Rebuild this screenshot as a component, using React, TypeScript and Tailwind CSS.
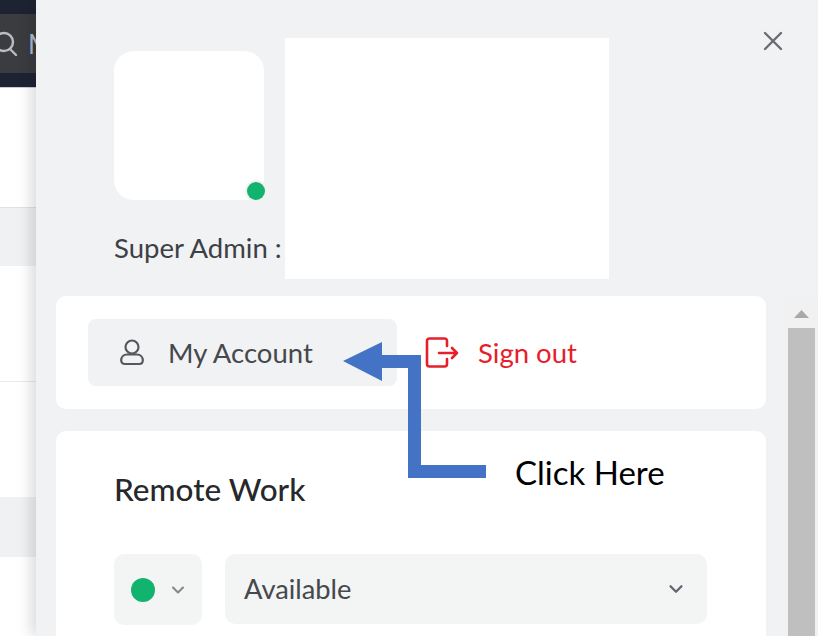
import { ChevronDown, X } from 'lucide-react';

function UserIcon() {
  return (
    <svg width="26" height="28" viewBox="0 0 26 28" fill="none" stroke="#55585c" strokeWidth={2.2}>
      <circle cx="13" cy="8" r="6.500" />
      <path d="M8 15.500h10c3.400 0 5.800 2.600 5.800 5.700 0 2.400-1.400 3.800-3.600 3.800H5.800c-2.200 0-3.600-1.400-3.600-3.800 0-3.100 2.400-5.700 5.800-5.700z" />
    </svg>
  );
}

function SignOutIcon() {
  return (
    <svg width="34" height="32" viewBox="0 0 34 32" fill="none" stroke="#e5202a" strokeWidth={2.600} strokeLinecap="round" strokeLinejoin="round">
      <path d="M22 9V4c0-1.600-.9-2.500-2.500-2.500h-15C2.900 1.500 2 2.400 2 4v23c0 1.600.9 2.500 2.500 2.500h15c1.600 0 2.500-.9 2.500-2.500v-5" />
      <path d="M14 16h18M27 11l5 5-5 5" />
    </svg>
  );
}

function Annotation() {
  return (
    <>
      <svg className="absolute left-[343px] top-[342px]" width="143" height="136" viewBox="0 0 143 136" fill="#4472c4">
        <path d="M0 19 39 0v13h39v110h65v13H65V26H39v13z" />
      </svg>
      <span className="absolute left-[515px] top-[452px] text-[33px] leading-[40px] text-black whitespace-nowrap">
        Click Here
      </span>
    </>
  );
}

export default function App() {
  return (
    <div className="relative w-[818px] h-[636px] flex overflow-hidden bg-white font-['Lato','Liberation_Sans',sans-serif]">
      {/* page behind the drawer */}
      <div className="w-[36px] shrink-0 flex flex-col">
        <div className="h-[88px] bg-[#1e2333] pt-[14px] border-b border-[#c9ccd0]">
          <div className="h-[59px] bg-[#3b3c40] flex items-center gap-[8px] overflow-hidden text-[#aebbd0]">
            <svg className="ml-[-6px] shrink-0" width="26" height="28" viewBox="0 0 26 28" fill="none" stroke="#b9bcc0" strokeWidth={2.400}>
              <circle cx="10" cy="12" r="9" />
              <path d="M16 19l6 6" strokeLinecap="round" />
            </svg>
            <span className="text-[26px] leading-none">M</span>
          </div>
        </div>
        <div className="h-[119px]" />
        <div className="h-[59px] bg-[#f0f1f3] border-t border-[#dfe1e3]" />
        <div className="h-[116px] border-b border-[#e8e9eb]" />
        <div className="h-[115px]" />
        <div className="h-[60px] bg-[#f0f1f3]" />
      </div>

      {/* drawer */}
      <div className="relative flex-1 flex flex-col bg-[#f1f2f4] shadow-[-6px_0_12px_rgba(0,0,0,0.13)]">
        <div className="h-[296px] shrink-0 flex pt-[38px] pl-[78px]">
          <div className="w-[171px] shrink-0">
            <div className="relative mt-[13px] w-[150px] h-[149px] rounded-[20px] bg-white">
              <span className="absolute left-[133px] top-[131px] w-[18px] h-[18px] rounded-full bg-[#12b26f] ring-2 ring-[#f1f2f4]" />
            </div>
            <p className="mt-[30px] text-[27.500px] leading-[36px] text-[#3d4044] whitespace-nowrap">Super Admin :</p>
          </div>
          <div className="w-[324px] h-[241px] bg-white" />
          <button className="absolute left-[721px] top-[25px] text-[#6a6d72]">
            <X size={32} strokeWidth={1.800} />
          </button>
        </div>

        <div className="flex-1 min-h-0 flex pl-[20px]">
          <div className="w-[710px] shrink-0 flex flex-col gap-[22px]">
            <div className="h-[113px] shrink-0 rounded-[10px] bg-white pl-[32px] pt-[23px] flex">
              <div className="w-[309px] h-[67px] rounded-[8px] bg-[#f1f2f4] flex items-center pl-[31px] gap-[23px]">
                <UserIcon />
                <span className="text-[27.500px] text-[#45484c] leading-none">My Account</span>
              </div>
              <div className="h-[67px] ml-[28px] flex items-center gap-[19px]">
                <SignOutIcon />
                <span className="text-[27.500px] text-[#e5202a] leading-none">Sign out</span>
              </div>
            </div>

            <div className="flex-1 rounded-t-[10px] bg-white pl-[58px] pr-[59px] pt-[38px]">
              <h2 className="text-[31.500px] leading-[40px] font-medium text-[#26282c]">Remote Work</h2>
              <div className="mt-[45px] flex gap-[23px]">
                <div className="w-[88px] h-[71px] rounded-[10px] bg-[#f3f4f4] flex items-center pl-[17px] gap-[13px]">
                  <span className="w-[24px] h-[24px] rounded-full bg-[#12b26f]" />
                  <ChevronDown size={20} strokeWidth={2.500} className="text-[#85868f]" />
                </div>
                <div className="flex-1 h-[70px] rounded-[10px] bg-[#f3f4f4] flex items-center justify-between pl-[19px] pr-[20px]">
                  <span className="text-[27.300px] text-[#45484c] leading-none">Available</span>
                  <ChevronDown size={22} strokeWidth={2.500} className="text-[#62646c]" />
                </div>
              </div>
            </div>
          </div>

          {/* scrollbar */}
          <div className="ml-[19px] w-[33px] shrink-0 bg-[#f1f1f1] flex flex-col items-center">
            <svg className="mt-[13px]" width="15" height="10" viewBox="0 0 15 10" fill="#a9a9a9">
              <path d="M7.500 1 15 9H0z" />
            </svg>
            <div className="mt-[9px] w-[27px] flex-1 bg-[#bfbfbf]" />
          </div>
        </div>
      </div>

      <Annotation />
    </div>
  );
}
